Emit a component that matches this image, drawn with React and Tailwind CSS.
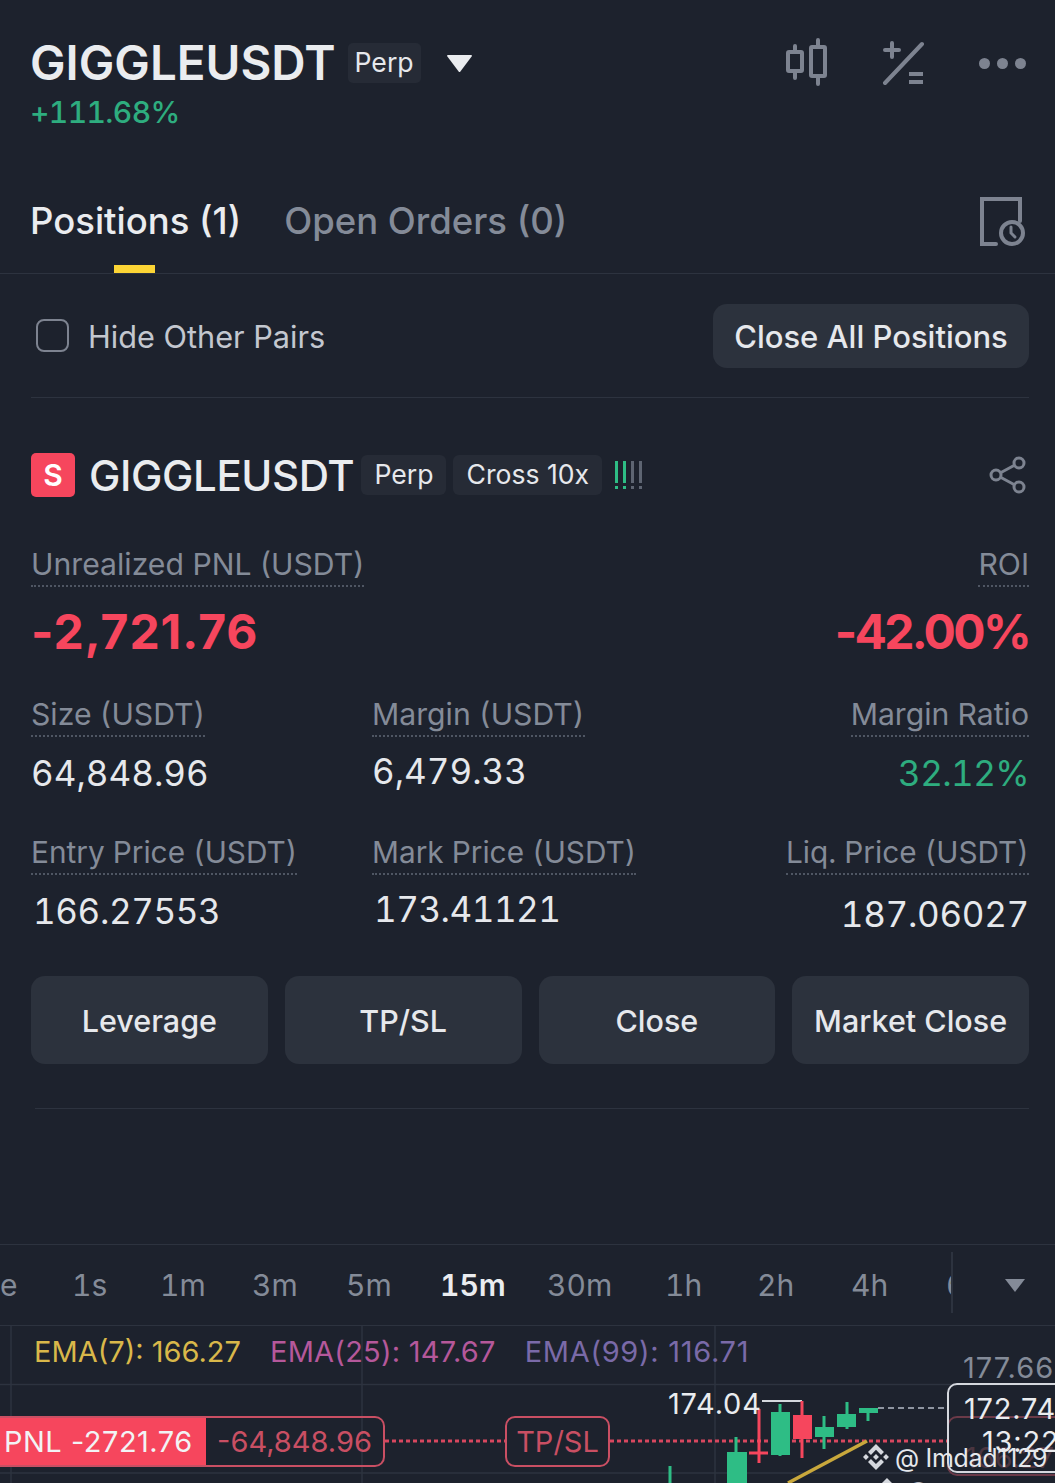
const Dotted = ({ children, small }) => (
  <span className={`block w-fit border-b-2 border-dotted border-[#4f5663] pb-px text-[#848b98] leading-[40px] ${small ? "text-[29.8px]" : "text-[30.2px]"}`}>
    {children}
  </span>
);

function CandleIcon() {
  return (
    <svg width="44" height="50" viewBox="0 0 44 50" fill="none" stroke="#7d8390" strokeWidth="4" strokeLinecap="round" strokeLinejoin="round">
      <rect x="2" y="14" width="14" height="19" rx="1" />
      <path d="M9 8v6M9 33v7" />
      <rect x="25" y="9" width="14" height="29" rx="1" />
      <path d="M32 2v7M32 38v8" />
    </svg>
  );
}

function CalcIcon() {
  return (
    <svg width="44" height="44" viewBox="0 0 44 44" fill="none" stroke="#7d8390" strokeLinecap="round">
      <path d="M3 42L40 3" strokeWidth="4" />
      <path d="M3 9h14M10 2v14" strokeWidth="4" />
      <path d="M27 33h14M27 41h14" strokeWidth="4" strokeLinecap="butt" />
    </svg>
  );
}

function DocClockIcon() {
  return (
    <svg width="46" height="50" viewBox="0 0 46 50" fill="none" stroke="#7d8390" strokeWidth="4" strokeLinecap="round">
      <path d="M17 47H3V2h38v22" />
      <circle cx="33" cy="36" r="11" />
      <path d="M32 30v6l4 4" strokeWidth="3" />
    </svg>
  );
}

function ShareIcon() {
  return (
    <svg width="38" height="38" viewBox="0 0 38 38" fill="none" stroke="#7d8390" strokeWidth="3">
      <circle cx="30" cy="7" r="5" />
      <circle cx="7" cy="19" r="5" />
      <circle cx="30" cy="31" r="5" />
      <path d="M12 16.500l13-7M12 21.500l13 7" />
    </svg>
  );
}

function BinanceMark({ x, y }) {
  return (
    <path
      transform={`translate(${x - 13} ${y - 13}) scale(0.205)`}
      fill="#d5d8de"
      d="M38.730 53.200l24.590-24.580 24.600 24.600 14.300-14.310L63.320 0 24.420 38.900l14.310 14.300zM0 63.310L14.300 49l14.310 14.310-14.310 14.300zM38.730 73.410L63.320 98l24.600-24.600 14.310 14.290-38.900 38.910-38.910-38.880v-.030zM98 63.310L112.300 49l14.310 14.300-14.310 14.320zM77.830 63.300L63.320 48.780 52.590 59.510l-1.240 1.230-2.540 2.540 14.510 14.500 14.510-14.470z"
    />
  );
}

function ChartDrawing() {
  const green = "#2ebd85";
  const red = "#f6465d";
  return (
    <svg className="absolute left-0 top-0" width="1055" height="157" viewBox="0 1326 1055 157" fill="none">
      <path d="M11 1326v157M362 1326v157M715 1326v157M0 1384.500h1055M0 1473h1055" stroke="#2d333f" strokeWidth="1.500" />
      <path d="M385 1441h120M610 1441h337" stroke="#d8475f" strokeWidth="3" strokeDasharray="4 3" />
      <path d="M878 1408h69" stroke="#8f95a1" strokeWidth="2" strokeDasharray="6 4" />
      <path d="M762 1401h40" stroke="#d5d8de" strokeWidth="2" />
      <path d="M788 1483L867 1441" stroke="#c9a83c" strokeWidth="3.500" />
      <path d="M670 1466v17M736 1437v20M780 1404v52M824 1416v33M847 1402v27M868 1412v9" stroke={green} strokeWidth="3" />
      <path d="M759 1409v54M749 1453h19M802 1401v57" stroke={red} strokeWidth="3" />
      <rect x="727" y="1452" width="20" height="31" fill={green} />
      <rect x="771" y="1412" width="19" height="43" fill={green} />
      <rect x="793" y="1415" width="19" height="24" fill={red} />
      <rect x="815" y="1427" width="19" height="10" fill={green} />
      <rect x="837" y="1414" width="19" height="13" fill={green} />
      <rect x="859" y="1408" width="19" height="5" fill={green} />
      <BinanceMark x={876} y={1457} />
      <BinanceMark x={887} y={1491} />
    </svg>
  );
}

const ActionButton = ({ children }) => (
  <button className="h-[88px] pt-px rounded-[14px] bg-[#2c323d] text-[#e6e8ec] text-[30.5px] font-medium">{children}</button>
);

const Tag = ({ children }) => (
  <span className="h-[40px] px-[13px] flex items-center rounded-[6px] bg-[#262b36] text-[#e6e8ec] text-[26.6px]">{children}</span>
);

export default function App() {
  return (
    <div className="w-[1055px] h-[1483px] overflow-hidden bg-[#1d222d] font-['Inter',sans-serif]">
      {/* header */}
      <header className="h-[176px] pl-[30px] pr-[26px] pt-[36px] flex justify-between items-start">
        <div>
          <div className="flex items-center h-[54px]">
            <h1 className="text-[47.500px] leading-[54px] font-semibold text-[#eaecef]">GIGGLEUSDT</h1>
            <span className="ml-[12px] h-[40px] px-[7px] flex items-center rounded-[5px] bg-[#262b36] text-[#e6e8ec] text-[26.6px]">Perp</span>
            <svg className="ml-[26px]" width="25" height="17" viewBox="0 0 25 17"><path d="M0 1a1 1 0 0 1 1-1h23a1 1 0 0 1 1 1L13 17h-1z" fill="#eaecef" /></svg>
          </div>
          <div className="mt-[2px] text-[30px] leading-[40px] tracking-[-0.6px] tabular-nums text-[#2ead7f] font-medium">+111.68%</div>
        </div>
        <div className="flex items-center gap-[52px] pr-[3px] pt-[2px]">
          <CandleIcon />
          <CalcIcon />
          <div className="flex gap-[7px] ml-[1px]">
            <span className="w-[11px] h-[11px] rounded-full bg-[#7d8390]" />
            <span className="w-[11px] h-[11px] rounded-full bg-[#7d8390]" />
            <span className="w-[11px] h-[11px] rounded-full bg-[#7d8390]" />
          </div>
        </div>
      </header>

      {/* tabs */}
      <nav className="h-[98px] pl-[30px] pr-[28px] flex items-start justify-between border-b border-[#2d333f]">
        <div className="flex gap-[43px] text-[36.500px] leading-[90px] font-medium">
          <div className="relative text-[#eaecef]">
            Positions (1)
            <span className="absolute left-[84px] top-[89px] w-[41px] h-[8px] bg-[#fcd535]" />
          </div>
          <div className="text-[#848b98]">Open Orders (0)</div>
        </div>
        <div className="pt-[21px] pr-[2px]"><DocClockIcon /></div>
      </nav>

      {/* hide other pairs */}
      <div className="ml-[31px] mr-[26px] h-[124px] flex items-center justify-between border-b border-[#2d333f]">
        <label className="flex items-center pl-[5px] gap-[19px] text-[30.7px] text-[#c3c7cf]">
          <span className="w-[33px] h-[33px] rounded-[8px] border-2 border-[#7d8390]" />
          <span className="pt-[3px]">Hide Other Pairs</span>
        </label>
        <button className="w-[316px] h-[64px] pt-[3px] rounded-[14px] bg-[#2c323d] text-[31px] font-medium text-[#e6e8ec]">Close All Positions</button>
      </div>

      {/* position card */}
      <section className="pl-[31px] pr-[26px]">
        <div className="mt-[54px] h-[46px] flex items-center">
          <span className="w-[44px] h-[44px] rounded-[5px] bg-[#f6465d] flex items-center justify-center text-white text-[30px] font-semibold">S</span>
          <span className="ml-[14px] text-[42px] font-medium tracking-[-0.4px] text-[#eaecef]">GIGGLEUSDT</span>
          <span className="ml-[7px] flex gap-[7px]">
            <Tag>Perp</Tag>
            <Tag>Cross 10x</Tag>
          </span>
          <span className="ml-[13px] flex gap-[5px]">
            <span className="w-[3px] h-[28px] border-b-[3px] border-t-[22px] border-[#2ebd85]" />
            <span className="w-[3px] h-[28px] border-b-[3px] border-t-[22px] border-[#2ebd85]" />
            <span className="w-[3px] h-[28px] border-b-[3px] border-t-[22px] border-[#5e6572]" />
            <span className="w-[3px] h-[28px] border-b-[3px] border-t-[22px] border-[#5e6572]" />
          </span>
          <span className="ml-auto pr-[2px]"><ShareIcon /></span>
        </div>

        <div className="mt-[46px] flex justify-between">
          <div>
            <Dotted>Unrealized PNL (USDT)</Dotted>
            <div className="mt-[18px] text-[48px] leading-[54px] font-bold tracking-[1px] text-[#f6465d]">-2,721.76</div>
          </div>
          <div className="flex flex-col items-end">
            <Dotted>ROI</Dotted>
            <div className="mt-[18px] text-[48px] leading-[54px] font-bold tracking-[-2.7px] text-[#f6465d]">-42.00%</div>
          </div>
        </div>

        <div className="mt-[35px] grid grid-cols-[341px_1fr_auto] gap-y-[37px] text-[35px] leading-[44px] tabular-nums text-[#e6e8ec]">
          <div>
            <Dotted>Size (USDT)</Dotted>
            <div className="mt-[14px]">64,848.96</div>
          </div>
          <div>
            <Dotted>Margin (USDT)</Dotted>
            <div className="mt-[12px]">6,479.33</div>
          </div>
          <div className="flex flex-col items-end">
            <Dotted>Margin Ratio</Dotted>
            <div className="mt-[14px] tracking-[-0.6px] text-[#2ead7f]">32.12%</div>
          </div>
          <div>
            <Dotted small>Entry Price (USDT)</Dotted>
            <div className="mt-[14px] pl-[2px] tracking-[-0.4px]">166.27553</div>
          </div>
          <div>
            <Dotted small>Mark Price (USDT)</Dotted>
            <div className="mt-[12px] pl-[2px] tracking-[-0.5px]">173.41121</div>
          </div>
          <div className="flex flex-col items-end">
            <Dotted small>Liq. Price (USDT)</Dotted>
            <div className="mt-[17px] tracking-[-0.3px]">187.06027</div>
          </div>
        </div>

        <div className="mt-[40px] grid grid-cols-4 gap-[17px]">
          <ActionButton>Leverage</ActionButton>
          <ActionButton>TP/SL</ActionButton>
          <ActionButton>Close</ActionButton>
          <ActionButton>Market Close</ActionButton>
        </div>
        <div className="mt-[44px] ml-[4px] h-px bg-[#2d333f]" />
      </section>

      {/* intervals */}
      <div className="mt-[135px] relative h-[82px] flex items-center overflow-hidden border-y border-[#2d333f] text-[30px] tabular-nums text-[#848b98]">
        <div className="flex whitespace-nowrap pl-[72px]">
          <span className="w-[88px]">1s</span>
          <span className="w-[92px]">1m</span>
          <span className="w-[94px]">3m</span>
          <span className="w-[94px]">5m</span>
          <span className="w-[107px] text-[#eaecef] font-semibold">15m</span>
          <span className="w-[118px]">30m</span>
          <span className="w-[92px]">1h</span>
          <span className="w-[94px]">2h</span>
          <span className="w-[80px]">4h</span>
        </div>
        <span className="absolute left-0">e</span>
        <span className="absolute left-[946px] w-[5px] overflow-hidden">6</span>
        <span className="absolute left-[951px] top-[7px] bottom-[12px] w-[2px] bg-[#2d333f]" />
        <svg className="absolute left-[1005px]" width="20" height="13" viewBox="0 0 20 13"><path d="M0 0h20L10 13z" fill="#848b98" /></svg>
      </div>

      {/* chart */}
      <div className="relative h-[157px] overflow-hidden">
        <ChartDrawing />
        <div className="relative flex gap-[29px] pl-[34px] pt-[8px] text-[29px] leading-[36px]">
          <span className="text-[#d9b84a]">EMA(7): 166.27</span>
          <span className="tracking-[0.25px] text-[#b5589b]">EMA(25): 147.67</span>
          <span className="tracking-[0.7px] text-[#7a6aa8]">EMA(99): 116.71</span>
        </div>
        <span className="absolute left-[963px] top-[24px] text-[29px] leading-[36px] tracking-[1px] text-[#848b98]">177.66</span>
        <span className="absolute left-[668px] top-[60px] text-[29px] leading-[36px] tracking-[0.8px] text-[#eaecef]">174.04</span>

        {/* position label */}
        <div className="absolute left-0 top-[90px] h-[51px] w-[385px] flex rounded-r-[10px] border-2 border-l-0 border-[#c94f63] text-[29px] whitespace-nowrap">
          <span className="w-[206px] pl-[4px] tracking-[0.5px] flex items-center bg-[#f6465d] text-[#f2f3f5]">PNL -2721.76</span>
          <span className="flex-1 flex items-center justify-center text-[#c94f63]">-64,848.96</span>
        </div>
        <div className="absolute left-[505px] top-[90px] h-[51px] w-[105px] flex items-center justify-center rounded-[10px] border-2 border-[#c94f63] text-[29px] text-[#c94f63]">TP/SL</div>

        {/* last price box */}
        <div className="absolute left-[947px] top-[90px] w-[120px] h-[60px] rounded-[10px] border-2 border-[#6b3a48] text-[29px] text-[#4a3540] pl-[16px] pt-[18px]">166.27</div>
        <div className="absolute left-[947px] top-[57px] w-[120px] h-[90px] rounded-[10px] border-2 border-[#d5d8de] text-[29px] leading-[36px] tracking-[0.8px] text-[#eaecef] pl-[15px] pt-[6px]">
          172.74
          <div className="mt-[-3px] pl-[18px]">13:22</div>
        </div>

        {/* watermark */}
        <span className="absolute left-[895px] top-[114px] whitespace-nowrap text-[25px] leading-[36px] tracking-[-0.3px] text-[#e6e8ec]">@ Imdad1129</span>
        <span className="absolute left-[906px] top-[150px] whitespace-nowrap text-[25px] leading-[36px] text-[#d5d8de]">@ Lisher 1057</span>
      </div>
    </div>
  );
}
